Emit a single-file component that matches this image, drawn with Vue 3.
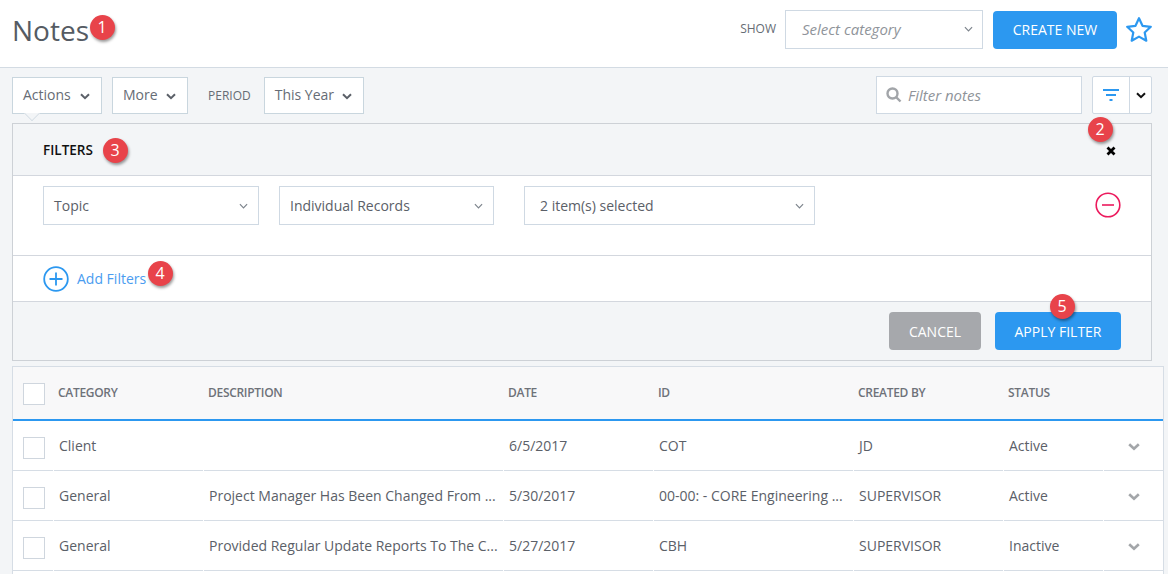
<template>
  <div class="page">
    <header class="top-bar">
      <h1 class="title">Notes</h1>
      <div class="top-actions">
        <span class="small-label show-label">SHOW</span>
        <div class="select category-select">
          <span class="placeholder">Select category</span>
          <svg class="thin-chev" viewBox="0 0 10 6"><path d="M1 1l4 4 4-4" /></svg>
        </div>
        <button class="btn btn-blue create-btn">CREATE NEW</button>
        <svg class="star" viewBox="0 0 28 26">
          <path d="M14 2.2l3.5 7.6 8.3 1-6.1 5.7 1.6 8.2-7.3-4.1-7.3 4.1 1.6-8.2-6.1-5.7 8.3-1z" />
        </svg>
      </div>
    </header>

    <div class="toolbar">
      <button class="tool-btn actions-btn">Actions<svg class="bold-chev" viewBox="0 0 10 7"><path d="M1 1.2l4 4 4-4" /></svg></button>
      <button class="tool-btn more-btn">More<svg class="bold-chev" viewBox="0 0 10 7"><path d="M1 1.2l4 4 4-4" /></svg></button>
      <span class="small-label period-label">PERIOD</span>
      <button class="tool-btn year-btn">This Year<svg class="bold-chev" viewBox="0 0 10 7"><path d="M1 1.2l4 4 4-4" /></svg></button>
      <div class="search">
        <svg class="search-icon" viewBox="0 0 16 16"><circle cx="6.5" cy="6.5" r="5" /><path d="M10.5 10.5l4 4" /></svg>
        <span class="placeholder">Filter notes</span>
      </div>
      <div class="filter-toggle">
        <div class="filter-icon-cell">
          <svg class="filter-icon" viewBox="0 0 16 12"><path d="M0 1h16M3 6h10M6.5 11h3" /></svg>
        </div>
        <div class="filter-caret-cell">
          <svg class="black-chev" viewBox="0 0 10 7"><path d="M1 1.2l4 4 4-4" /></svg>
        </div>
      </div>
    </div>

    <section class="filters">
      <div class="filters-head">
        <span class="filters-title">FILTERS</span>
        <svg class="close-icon" viewBox="0 0 10 10"><path d="M1.5 1.5l7 7M8.5 1.5l-7 7" /></svg>
      </div>
      <div class="filters-row">
        <div v-for="f in filterSelects" :key="f.text" class="select filter-select" :class="f.cls">
          <span>{{ f.text }}</span>
          <svg class="thin-chev" viewBox="0 0 10 6"><path d="M1 1l4 4 4-4" /></svg>
        </div>
        <svg class="minus-icon" viewBox="0 0 26 26"><circle cx="13" cy="13" r="11.8" /><path d="M7 13h12" /></svg>
      </div>
      <div class="filters-add">
        <svg class="plus-icon" viewBox="0 0 26 26"><circle cx="13" cy="13" r="11.8" /><path d="M13 6.5v13M6.5 13h13" /></svg>
        <span class="add-text">Add Filters</span>
      </div>
      <div class="filters-foot">
        <button class="btn btn-grey cancel-btn">CANCEL</button>
        <button class="btn btn-blue apply-btn">APPLY FILTER</button>
      </div>
    </section>

    <section class="table">
      <div class="thead">
        <div class="check-cell"><span class="check"></span></div>
        <div v-for="c in columns" :key="c" class="th">{{ c }}</div>
        <div></div>
      </div>
      <div v-for="(r, i) in rows" :key="i" class="trow">
        <div class="td check-cell"><span class="check"></span></div>
        <div class="td">{{ r.category }}</div>
        <div class="td">{{ r.description }}</div>
        <div class="td">{{ r.date }}</div>
        <div class="td">{{ r.id }}</div>
        <div class="td">{{ r.by }}</div>
        <div class="td">{{ r.status }}</div>
        <div class="td chev-cell">
          <svg class="row-chev" viewBox="0 0 12 8"><path d="M1.2 1.2l4.8 4.6 4.8-4.6" /></svg>
        </div>
      </div>
    </section>

    <span
      v-for="b in badges"
      :key="b.n"
      class="badge"
      :style="{ left: b.x + 'px', top: b.y + 'px' }"
    >{{ b.n }}</span>
  </div>
</template>

<script setup>
const filterSelects = [
  { text: 'Topic', cls: 'sel-topic' },
  { text: 'Individual Records', cls: 'sel-records' },
  { text: '2 item(s) selected', cls: 'sel-items' },
]

const columns = ['CATEGORY', 'DESCRIPTION', 'DATE', 'ID', 'CREATED BY', 'STATUS']

const rows = [
  { category: 'Client', description: '', date: '6/5/2017', id: 'COT', by: 'JD', status: 'Active' },
  { category: 'General', description: 'Project Manager Has Been Changed From ...', date: '5/30/2017', id: '00-00: - CORE Engineering ...', by: 'SUPERVISOR', status: 'Active' },
  { category: 'General', description: 'Provided Regular Update Reports To The C...', date: '5/27/2017', id: 'CBH', by: 'SUPERVISOR', status: 'Inactive' },
]

// callout numbers sit on top of the page, centre points taken from the layout
const badges = [
  { n: 1, x: 102, y: 27 },
  { n: 2, x: 1100, y: 129 },
  { n: 3, x: 115, y: 150 },
  { n: 4, x: 160, y: 273 },
  { n: 5, x: 1062, y: 306 },
]
</script>

<style scoped>
.page {
  position: relative;
  width: 1168px;
  height: 574px;
  overflow: hidden;
  background: #f3f5f7;
  font-family: "Open Sans", sans-serif;
  font-size: 14px;
  color: #5b6068;
}

/* ── Header ── */
.top-bar {
  height: 60px;
  background: #fff;
  border-bottom: 1px solid #d3dbe3;
  display: flex;
  align-items: center;
  justify-content: space-between;
  padding: 0 15px 7px 12px;
}
.title {
  margin: 0;
  font-size: 28px;
  font-weight: 400;
  line-height: 38px;
  color: #555b63;
}
.top-actions {
  display: flex;
  align-items: center;
}
.small-label {
  font-size: 12px;
  color: #666c74;
}
.show-label {
  margin-right: 9px;
  margin-top: -3px;
}
.select {
  box-sizing: border-box;
  display: flex;
  align-items: center;
  justify-content: space-between;
  height: 39px;
  background: #fff;
  border: 1px solid #cfd9e3;
}
.category-select {
  width: 198px;
  padding: 0 9px 1px 16px;
  margin-bottom: 1px;
}
.placeholder {
  font-size: 15px;
  font-style: italic;
  color: #8f949a;
}
.thin-chev {
  width: 9px;
  height: 6px;
  fill: none;
  stroke: #7d848c;
  stroke-width: 1.3;
}
.btn {
  box-sizing: border-box;
  height: 38px;
  border: 0;
  border-radius: 4px;
  color: #fff;
  font-family: inherit;
  font-size: 14px;
  padding: 0;
}
.btn-blue { background: #2c98f0; }
.btn-grey { background: #a6a8ac; }
.create-btn {
  width: 124px;
  margin-left: 10px;
  padding-bottom: 2px;
}
.star {
  width: 28px;
  height: 26px;
  margin-left: 8px;
  margin-bottom: 2px;
  fill: none;
  stroke: #2c98f0;
  stroke-width: 2.2;
  stroke-linejoin: round;
}

/* ── Toolbar ── */
.toolbar {
  display: flex;
  align-items: center;
  height: 38px;
  margin: 8px 16px 9px 12px;
}
.tool-btn {
  box-sizing: border-box;
  height: 37px;
  display: flex;
  align-items: center;
  justify-content: space-between;
  padding: 0 11px 2px 10px;
  background: #fff;
  border: 1px solid #c9d6de;
  font-family: inherit;
  font-size: 14px;
  color: #666c75;
}
.bold-chev {
  width: 10px;
  height: 7px;
  margin-top: 5px;
  fill: none;
  stroke: #5b6068;
  stroke-width: 2;
}
.actions-btn {
  position: relative;
  width: 90px;
}
/* small pointer from the Actions button down to the panel */
.actions-btn::after {
  content: "";
  position: absolute;
  left: 13px;
  bottom: -6px;
  width: 11px;
  height: 11px;
  background: #f3f5f7;
  border-right: 1px solid #d3dbe3;
  border-bottom: 1px solid #d3dbe3;
  transform: rotate(45deg);
  clip-path: polygon(100% 0, 100% 100%, 0 100%);
}
.more-btn {
  width: 76px;
  margin-left: 10px;
}
.period-label {
  margin-left: 20px;
  margin-right: 13px;
}
.year-btn {
  width: 100px;
}
.search {
  box-sizing: border-box;
  width: 206px;
  height: 38px;
  margin-left: auto;
  display: flex;
  align-items: center;
  padding-left: 9px;
  background: #fff;
  border: 1px solid #cfd9e3;
}
.search-icon {
  width: 16px;
  height: 16px;
  margin-right: 6px;
  fill: none;
  stroke: #a2a5a9;
  stroke-width: 2.4;
}
.filter-toggle {
  box-sizing: border-box;
  width: 60px;
  height: 38px;
  margin-left: 10px;
  display: flex;
  background: #fff;
  border: 1px solid #cfd9e3;
  border-radius: 2px;
}
.filter-icon-cell {
  width: 36px;
  display: flex;
  align-items: center;
  justify-content: center;
  border-right: 1px solid #cfd9e3;
}
.filter-icon {
  width: 16px;
  height: 12px;
  fill: none;
  stroke: #2c98f0;
  stroke-width: 2;
}
.filter-caret-cell {
  flex: 1;
  display: flex;
  align-items: center;
  justify-content: center;
}
.black-chev {
  width: 10px;
  height: 7px;
  fill: none;
  stroke: #111;
  stroke-width: 2;
}

/* ── Filter panel ── */
.filters {
  box-sizing: border-box;
  width: 1140px;
  height: 238px;
  margin-left: 12px;
  border: 1px solid #cdd1d6;
}
.filters-head {
  box-sizing: border-box;
  height: 52px;
  display: flex;
  align-items: center;
  justify-content: space-between;
  padding: 0 35px 0 30px;
  border-bottom: 1px solid #d3d7de;
}
.filters-title {
  color: #111;
  font-weight: 600;
  font-size: 13.5px;
  margin-top: 1px;
}
.close-icon {
  width: 10px;
  height: 10px;
  margin-top: 3px;
  fill: none;
  stroke: #000;
  stroke-width: 2.8;
}
.filters-row {
  box-sizing: border-box;
  height: 80px;
  display: flex;
  align-items: flex-start;
  padding: 10px 30px 0;
  background: #fff;
  border-bottom: 1px solid #d3d7de;
}
.filter-select {
  padding: 0 10px;
}
.sel-topic { width: 216px; }
.sel-records { width: 215px; margin-left: 20px; }
.sel-items { width: 291px; margin-left: 30px; padding-left: 15px; }
.minus-icon {
  width: 26px;
  height: 26px;
  margin-left: auto;
  margin-top: 6px;
  fill: none;
  stroke: #ec1a5d;
  stroke-width: 1.6;
}
.filters-add {
  box-sizing: border-box;
  height: 46px;
  display: flex;
  align-items: center;
  padding-left: 30px;
  background: #fff;
  border-bottom: 1px solid #d3d7de;
}
.plus-icon {
  width: 26px;
  height: 26px;
  fill: none;
  stroke: #2c98f0;
  stroke-width: 1.8;
}
.add-text {
  margin-left: 8px;
  color: #4a9cf0;
}
.filters-foot {
  display: flex;
  justify-content: flex-end;
  gap: 14px;
  padding: 10px 30px 0 0;
}
.cancel-btn { width: 92px; }
.apply-btn { width: 126px; }

/* ── Table ── */
.table {
  box-sizing: border-box;
  width: 1152px;
  height: 300px;
  margin: 5px 0 0 12px;
  background: #fff;
  border: 1px solid #d6dde5;
}
.thead {
  display: grid;
  grid-template-columns: 40px 150px 300px 150px 200px 150px 1fr;
  grid-template-rows: 52px;
  align-items: center;
  background: #f8f8f9;
  border-bottom: 2px solid #2c98f0;
}
.trow {
  display: grid;
  grid-template-columns: 40px 150px 300px 150px 200px 150px 100px 1fr;
  height: 50px;
}
.th {
  padding-left: 5px;
  margin-top: -2px;
  font-size: 12px;
  font-weight: 600;
  color: #6e7279;
  letter-spacing: -0.3px;
}
.td {
  box-sizing: border-box;
  display: flex;
  align-items: center;
  padding-left: 5px;
  margin-left: 1px;
  white-space: nowrap;
  overflow: hidden;
  border-bottom: 1px solid #d6dde5;
}
.check-cell {
  margin-left: 0;
  padding: 2px 0 0 10px;
  display: flex;
  align-items: center;
}
.td.check-cell {
  padding: 5px 0 0 10px;
}
.check {
  box-sizing: border-box;
  width: 22px;
  height: 22px;
  background: #fff;
  border: 1px solid #cfd6de;
}
.td.chev-cell {
  justify-content: center;
  padding-left: 0;
}
.row-chev {
  width: 12px;
  height: 8px;
  margin-top: 3px;
  fill: none;
  stroke: #a3a6a9;
  stroke-width: 2.6;
}

/* ── Numbered callouts ── */
.badge {
  position: absolute;
  width: 25px;
  height: 25px;
  margin: -12.5px 0 0 -12.5px;
  border-radius: 50%;
  background: #e8434a;
  color: #fff;
  font-size: 16px;
  line-height: 24px;
  text-align: center;
  box-shadow: 1px 2px 3px rgba(0, 0, 0, 0.4);
}
</style>

<style>
html, body {
  margin: 0;
  background: #f3f5f7;
}
</style>
